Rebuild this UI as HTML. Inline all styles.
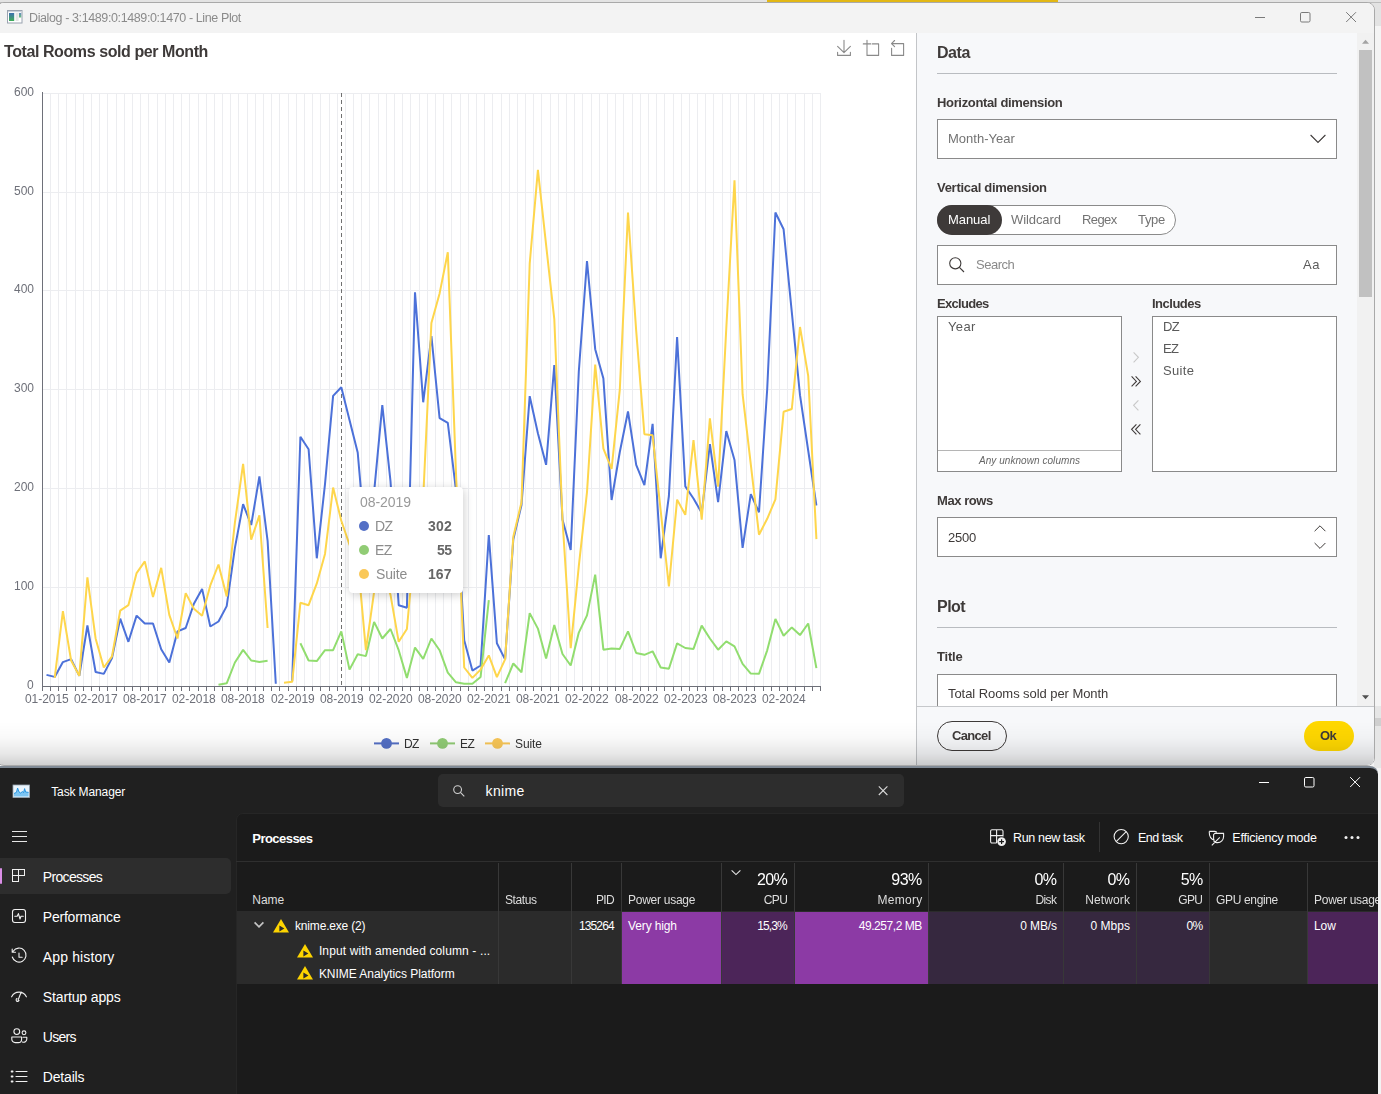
<!DOCTYPE html>
<html><head><meta charset="utf-8"><title>Line Plot</title>
<style>
html,body{margin:0;padding:0;}
html{overflow:hidden;width:1381px;height:1094px;}
body{width:1381px;height:1094px;overflow:hidden;background:#f3f3f3;font-family:"Liberation Sans",sans-serif;position:relative;}
.a{position:absolute;box-sizing:border-box;}
.t{position:absolute;white-space:nowrap;font-family:"Liberation Sans",sans-serif;}
.g .t{will-change:transform}
svg{overflow:visible}
</style></head><body>
<!-- desktop / other window strips -->
<div class="a" style="left:0;top:0;width:1381px;height:26px;background:#e3e3e3"></div>
<div class="a" style="left:0;top:2px;width:1381px;height:1px;background:#bdbdbd"></div>
<div class="a" style="left:767px;top:0;width:291px;height:2px;background:#e2b714"></div>
<div class="a" style="left:1374px;top:26px;width:7px;height:742px;background:#f4f4f4"></div>
<div class="a" style="left:1374px;top:706px;width:7px;height:62px;background:#e6e6e6"></div>
<div class="a" style="left:1374px;top:718px;width:7px;height:8px;background:#cfcfcf"></div>

<!-- DIALOG WINDOW -->
<div class="a" style="left:-4px;top:2px;width:1379px;height:764px;border:1px solid #a9a9a9;border-radius:8px;background:#fff;overflow:hidden">
<div class="a g" style="left:3px;top:-3px;width:1381px;height:1094px">
  <!-- title bar -->
  <div class="a" style="left:0;top:3px;width:1381px;height:30px;background:#f3f3f3"></div>
  <svg class="a" style="left:7px;top:10px" width="16" height="14" viewBox="0 0 16 14">
    <rect x="0.5" y="0.5" width="14.5" height="12.5" fill="#fff" stroke="#9aa3b0"/>
    <rect x="1" y="1" width="13.5" height="1.2" fill="#c9d0da"/>
    <defs><linearGradient id="gi" x1="0" y1="0" x2="0" y2="1"><stop offset="0" stop-color="#3d6fb0"/><stop offset="1" stop-color="#3fae58"/></linearGradient></defs>
    <rect x="2" y="3" width="5.2" height="8" fill="url(#gi)"/>
    <rect x="8.6" y="3" width="3" height="8" fill="#e4e4e4"/>
    <rect x="12" y="3" width="2.2" height="4.5" fill="url(#gi)" opacity="0.8"/>
  </svg>
  <svg class="a" style="left:1250px;top:8px" width="112" height="20" viewBox="1250 8 112 20" fill="none" stroke="#7a7a7a" stroke-width="1">
    <path d="M1255 17.5H1265"/>
    <rect x="1300.5" y="12.5" width="9.5" height="9.5" rx="1.3"/>
    <path d="M1346.2 12.2L1356 22M1356 12.2L1346.2 22"/>
  </svg>
  <!-- right panel backgrounds -->
  <div class="a" style="left:916px;top:33px;width:1px;height:733px;background:#c3c5c8"></div>
  <div class="a" style="left:917px;top:33px;width:457px;height:733px;background:#f7f8fa"></div>
  <!-- scrollbar -->
  <div class="a" style="left:1357px;top:33px;width:17px;height:673px;background:#f1f1f1"></div>
  <div class="a" style="left:1359px;top:50px;width:13px;height:247px;background:#c1c1c1"></div>
  <svg class="a" style="left:1357px;top:33px" width="17" height="673" viewBox="1357 33 17 673"><path d="M1362 43.8L1365.5 39.8L1369 43.8Z" fill="#a3a3a3"/><path d="M1362 695.2L1365.5 699.2L1369 695.2Z" fill="#505050"/></svg>
  <!-- panel controls -->
  <div class="a" style="left:937px;top:73px;width:400px;height:1px;background:#b9bcc0"></div>
  <div class="a" style="left:937px;top:119px;width:400px;height:40px;background:#fff;border:1px solid #8a8a8a"></div>
  <svg class="a" style="left:1308px;top:132px" width="20" height="14" viewBox="1308 132 20 14" fill="none" stroke="#3e3a39" stroke-width="1.1"><path d="M1310.6 135L1318 142.4L1325.4 135"/></svg>
  <div class="a" style="left:937px;top:205px;width:239px;height:30px;background:#fff;border:1px solid #8a8a8a;border-radius:15px"></div>
  <div class="a" style="left:937px;top:205px;width:64.5px;height:30px;background:#3e3a39;border-radius:15px"></div>
  <div class="a" style="left:937px;top:245px;width:400px;height:40px;background:#fff;border:1px solid #8a8a8a"></div>
  <svg class="a" style="left:946px;top:254px" width="22" height="22" viewBox="946 254 22 22" fill="none" stroke="#3e3a39" stroke-width="1.1"><circle cx="955.3" cy="263.3" r="5.6"/><path d="M959.4 267.4L964 272"/></svg>
  <div class="a" style="left:937px;top:316px;width:185px;height:156px;background:#fff;border:1px solid #8a8a8a"></div>
  <div class="a" style="left:938px;top:450px;width:183px;height:1px;background:#b5b5b5"></div>
  <div class="a" style="left:1152px;top:316px;width:185px;height:156px;background:#fff;border:1px solid #8a8a8a"></div>
  <svg class="a" style="left:1128px;top:348px" width="16" height="92" viewBox="1128 348 16 92" fill="none" stroke-width="1.1">
    <path d="M1133.6 352.3L1138.4 357.3L1133.6 362.3" stroke="#c8c8c8"/>
    <path d="M1131.6 376.4L1136.4 381.4L1131.6 386.4M1135.6 376.4L1140.4 381.4L1135.6 386.4" stroke="#3e3a39"/>
    <path d="M1138.4 400.3L1133.6 405.3L1138.4 410.3" stroke="#c8c8c8"/>
    <path d="M1136.4 424.3L1131.6 429.3L1136.4 434.3M1140.4 424.3L1135.6 429.3L1140.4 434.3" stroke="#3e3a39"/>
  </svg>
  <div class="a" style="left:937px;top:517px;width:400px;height:40px;background:#fff;border:1px solid #8a8a8a"></div>
  <svg class="a" style="left:1310px;top:520px" width="20" height="34" viewBox="1310 520 20 34" fill="none" stroke="#3e3a39" stroke-width="1"><path d="M1314.6 531.2L1320 525.8L1325.4 531.2M1314.6 543L1320 548.4L1325.4 543"/></svg>
  <div class="a" style="left:937px;top:627px;width:400px;height:1px;background:#b9bcc0"></div>
  <div class="a" style="left:937px;top:674px;width:400px;height:40px;background:#fff;border:1px solid #8a8a8a"></div>
  <!-- chart -->
<svg style="position:absolute;left:0;top:0" width="917" height="766" viewBox="0 0 917 766" fill="none">
<path d="M50.5 93V686 M58.5 93V686 M66.5 93V686 M75.5 93V686 M83.5 93V686 M91.5 93V686 M99.5 93V686 M107.5 93V686 M116.5 93V686 M124.5 93V686 M132.5 93V686 M140.5 93V686 M148.5 93V686 M157.5 93V686 M165.5 93V686 M173.5 93V686 M181.5 93V686 M189.5 93V686 M198.5 93V686 M206.5 93V686 M214.5 93V686 M222.5 93V686 M230.5 93V686 M238.5 93V686 M247.5 93V686 M255.5 93V686 M263.5 93V686 M271.5 93V686 M279.5 93V686 M288.5 93V686 M296.5 93V686 M304.5 93V686 M312.5 93V686 M320.5 93V686 M329.5 93V686 M337.5 93V686 M345.5 93V686 M353.5 93V686 M361.5 93V686 M369.5 93V686 M378.5 93V686 M386.5 93V686 M394.5 93V686 M402.5 93V686 M410.5 93V686 M419.5 93V686 M427.5 93V686 M435.5 93V686 M443.5 93V686 M451.5 93V686 M460.5 93V686 M468.5 93V686 M476.5 93V686 M484.5 93V686 M492.5 93V686 M501.5 93V686 M509.5 93V686 M517.5 93V686 M525.5 93V686 M533.5 93V686 M541.5 93V686 M550.5 93V686 M558.5 93V686 M566.5 93V686 M574.5 93V686 M582.5 93V686 M591.5 93V686 M599.5 93V686 M607.5 93V686 M615.5 93V686 M623.5 93V686 M632.5 93V686 M640.5 93V686 M648.5 93V686 M656.5 93V686 M664.5 93V686 M673.5 93V686 M681.5 93V686 M689.5 93V686 M697.5 93V686 M705.5 93V686 M713.5 93V686 M722.5 93V686 M730.5 93V686 M738.5 93V686 M746.5 93V686 M754.5 93V686 M763.5 93V686 M771.5 93V686 M779.5 93V686 M787.5 93V686 M795.5 93V686 M804.5 93V686 M812.5 93V686 M820.5 93V686" stroke="#ecedf0" stroke-width="1" shape-rendering="crispEdges"/>
<path d="M43 587.5H821 M43 488.5H821 M43 389.5H821 M43 290.5H821 M43 192.5H821 M43 93.5H821" stroke="#ecedf0" stroke-width="1" shape-rendering="crispEdges"/>
<path d="M341.5 93V686" stroke="#707070" stroke-width="1" stroke-dasharray="4 3" shape-rendering="crispEdges"/>
<g stroke-width="2" stroke-linejoin="bevel" stroke-linecap="butt" transform="translate(0,-0.6)">
<path d="M46.5 675.5 L54.7 677.5 L62.9 662.7 L71.1 659.7 L79.3 676.5 L87.4 626.1 L95.6 672.6 L103.8 674.5 L112.0 658.7 L120.2 619.2 L128.4 642.4 L136.6 616.2 L144.8 624.1 L153.0 624.1 L161.2 649.8 L169.3 663.1 L177.5 632.0 L185.7 628.6 L193.9 604.4 L202.1 589.5 L210.3 627.1 L218.5 622.1 L226.7 606.7 L234.9 548.5 L243.1 504.8 L251.2 525.6 L259.4 477.0 L267.6 541.4 L275.8 684.4 M292.2 681.5 L300.4 437.3 L308.6 449.8 L316.8 558.9 L325.0 484.7 L333.1 396.5 L341.3 387.9 L349.5 420.5 L357.7 453.1 L365.9 548.0 L374.1 492.7 L382.3 405.7 L390.5 481.8 L398.7 605.8 L406.9 608.3 L415.0 293.0 L423.2 402.9 L431.4 336.6 L439.6 418.7 L447.8 423.5 L456.0 490.7 L464.2 640.9 L472.4 671.2 L480.6 666.1 L488.8 535.7 L496.9 643.9 L505.1 660.0 L513.3 540.1 L521.5 505.5 L529.7 396.8 L537.9 433.9 L546.1 465.4 L554.3 365.6 L562.5 520.3 L570.7 550.5 L578.8 372.1 L587.0 261.6 L595.2 349.8 L603.4 379.2 L611.6 500.6 L619.8 452.6 L628.0 412.1 L636.2 465.4 L644.4 485.7 L652.6 424.4 L660.7 558.9 L668.9 496.6 L677.1 337.7 L685.3 487.0 L693.5 499.1 L701.7 513.4 L709.9 444.7 L718.1 502.8 L726.3 431.7 L734.5 460.5 L742.6 548.5 L750.8 494.7 L759.0 512.9 L767.2 389.8 L775.4 213.1 L783.6 229.9 L791.8 312.7 L800.0 395.8 L808.2 451.1 L816.4 506.1" stroke="#4c71d9"/>
<path d="M218.5 685.4 L226.7 683.9 L234.9 663.1 L243.1 650.5 L251.2 661.1 L259.4 662.5 L267.6 661.3 M300.4 643.9 L308.6 661.1 L316.8 661.7 L325.0 650.8 L333.1 650.8 L341.3 632.0 L349.5 670.2 L357.7 654.8 L365.9 656.7 L374.1 622.5 L382.3 639.1 L390.5 629.6 L398.7 650.8 L406.9 678.5 L415.0 648.2 L423.2 659.4 L431.4 639.1 L439.6 650.8 L447.8 673.3 L456.0 682.9 L464.2 684.4 L472.4 684.4 L480.6 677.5 L488.8 600.8 M505.1 683.7 L513.3 664.1 L521.5 672.9 L529.7 613.7 L537.9 629.2 L546.1 659.0 L554.3 625.5 L562.5 654.6 L570.7 666.1 L578.8 633.2 L587.0 616.0 L595.2 575.2 L603.4 650.3 L611.6 649.2 L619.8 649.5 L628.0 632.0 L636.2 653.6 L644.4 655.4 L652.6 651.9 L660.7 668.1 L668.9 669.4 L677.1 644.0 L685.3 648.6 L693.5 649.5 L701.7 626.2 L709.9 639.1 L718.1 650.3 L726.3 642.0 L734.5 646.9 L742.6 664.5 L750.8 674.2 L759.0 674.4 L767.2 650.9 L775.4 619.5 L783.6 636.3 L791.8 628.0 L800.0 635.7 L808.2 624.1 L816.4 668.7" stroke="#91dd6f"/>
<path d="M54.7 678.5 L62.9 611.8 L71.1 661.1 L79.3 676.5 L87.4 577.9 L95.6 639.0 L103.8 668.1 L112.0 656.9 L120.2 611.3 L128.4 605.8 L136.6 573.7 L144.8 562.0 L153.0 597.7 L161.2 568.4 L169.3 615.4 L177.5 639.1 L185.7 593.7 L193.9 609.3 L202.1 616.4 L210.3 586.0 L218.5 565.1 L226.7 597.1 L234.9 523.3 L243.1 464.5 L251.2 540.3 L259.4 516.0 L267.6 628.6 M284.0 683.4 L292.2 682.4 L300.4 603.4 L308.6 605.8 L316.8 584.0 L325.0 554.5 L333.1 488.2 L341.3 521.3 L349.5 545.4 L357.7 559.9 L365.9 650.8 L374.1 592.5 L382.3 567.8 L390.5 595.5 L398.7 642.4 L406.9 629.6 L415.0 541.1 L423.2 498.6 L431.4 323.6 L439.6 294.0 L447.8 252.8 L456.0 473.9 L464.2 668.1 L472.4 678.5 L480.6 670.2 L488.8 656.0 L496.9 677.7 L505.1 660.0 L513.3 537.3 L521.5 502.8 L529.7 264.3 L537.9 170.4 L546.1 245.5 L554.3 319.7 L562.5 520.3 L570.7 648.8 L578.8 566.8 L587.0 492.7 L595.2 365.1 L603.4 449.2 L611.6 469.4 L619.8 390.3 L628.0 213.1 L636.2 331.5 L644.4 434.8 L652.6 435.9 L660.7 511.4 L668.9 587.0 L677.1 500.2 L685.3 515.4 L693.5 440.7 L701.7 520.3 L709.9 418.9 L718.1 487.3 L726.3 328.6 L734.5 180.8 L742.6 394.8 L750.8 465.0 L759.0 535.3 L767.2 519.4 L775.4 500.0 L783.6 412.4 L791.8 409.6 L800.0 327.6 L808.2 376.4 L816.4 539.7" stroke="#fed64c"/>
</g>
<path d="M42.5 92V687 M42 686.5H821 M42.5 687V691 M50.5 687V691 M58.5 687V691 M66.5 687V691 M75.5 687V691 M83.5 687V691 M91.5 687V691 M99.5 687V691 M107.5 687V691 M116.5 687V691 M124.5 687V691 M132.5 687V691 M140.5 687V691 M148.5 687V691 M157.5 687V691 M165.5 687V691 M173.5 687V691 M181.5 687V691 M189.5 687V691 M198.5 687V691 M206.5 687V691 M214.5 687V691 M222.5 687V691 M230.5 687V691 M238.5 687V691 M247.5 687V691 M255.5 687V691 M263.5 687V691 M271.5 687V691 M279.5 687V691 M288.5 687V691 M296.5 687V691 M304.5 687V691 M312.5 687V691 M320.5 687V691 M329.5 687V691 M337.5 687V691 M345.5 687V691 M353.5 687V691 M361.5 687V691 M369.5 687V691 M378.5 687V691 M386.5 687V691 M394.5 687V691 M402.5 687V691 M410.5 687V691 M419.5 687V691 M427.5 687V691 M435.5 687V691 M443.5 687V691 M451.5 687V691 M460.5 687V691 M468.5 687V691 M476.5 687V691 M484.5 687V691 M492.5 687V691 M501.5 687V691 M509.5 687V691 M517.5 687V691 M525.5 687V691 M533.5 687V691 M541.5 687V691 M550.5 687V691 M558.5 687V691 M566.5 687V691 M574.5 687V691 M582.5 687V691 M591.5 687V691 M599.5 687V691 M607.5 687V691 M615.5 687V691 M623.5 687V691 M632.5 687V691 M640.5 687V691 M648.5 687V691 M656.5 687V691 M664.5 687V691 M673.5 687V691 M681.5 687V691 M689.5 687V691 M697.5 687V691 M705.5 687V691 M713.5 687V691 M722.5 687V691 M730.5 687V691 M738.5 687V691 M746.5 687V691 M754.5 687V691 M763.5 687V691 M771.5 687V691 M779.5 687V691 M787.5 687V691 M795.5 687V691 M804.5 687V691 M812.5 687V691 M820.5 687V691" stroke="#6e7079" stroke-width="1" shape-rendering="crispEdges"/>
<path d="M374.0 743.4H399.0" stroke="#5470c6" stroke-width="2"/><circle cx="386.5" cy="743.4" r="5.4" fill="#5470c6"/>
<path d="M430.0 743.4H455.0" stroke="#91cc75" stroke-width="2"/><circle cx="442.5" cy="743.4" r="5.4" fill="#91cc75"/>
<path d="M485.0 743.4H510.0" stroke="#fac858" stroke-width="2"/><circle cx="497.5" cy="743.4" r="5.4" fill="#fac858"/>
<g stroke="#8a8a8a" stroke-width="1.1" stroke-linecap="round" stroke-linejoin="round">
<path d="M844 40.2V52.4 M837.6 46.3L844 52.6L850.4 46.3 M837.6 52.3V55.4H850.4V52.3"/>
<path d="M867 40.3V55.4H878.6V43.9H872.4 M863.3 43.9H870.8"/>
<path d="M891.6 48.4V55.4H903.6V43.6H891.6 M894.6 40.5L891.5 43.6L894.6 46.7"/>
</g>
</svg>
<span class="t" style="top:12px;font-size:12.5px;line-height:12.5px;color:#8b8b8b;letter-spacing:-0.391px;left:28.70px;">Dialog - 3:1489:0:1489:0:1470 - Line Plot</span>
<span class="t" style="top:44px;font-size:16px;line-height:16px;color:#3e3a39;font-weight:700;letter-spacing:-0.417px;left:4.30px;">Total Rooms sold per Month</span>
<span class="t" style="top:679px;font-size:12px;line-height:12px;color:#6e7079;right:1347.40px;">0</span>
<span class="t" style="top:580px;font-size:12px;line-height:12px;color:#6e7079;right:1347.40px;">100</span>
<span class="t" style="top:481px;font-size:12px;line-height:12px;color:#6e7079;right:1347.40px;">200</span>
<span class="t" style="top:382px;font-size:12px;line-height:12px;color:#6e7079;right:1347.40px;">300</span>
<span class="t" style="top:283px;font-size:12px;line-height:12px;color:#6e7079;right:1347.40px;">400</span>
<span class="t" style="top:185px;font-size:12px;line-height:12px;color:#6e7079;right:1347.40px;">500</span>
<span class="t" style="top:86px;font-size:12px;line-height:12px;color:#6e7079;right:1347.40px;">600</span>
<span class="t" style="top:693px;font-size:12px;line-height:12px;color:#6e7079;letter-spacing:-0.058px;left:24.84px;">01-2015</span>
<span class="t" style="top:693px;font-size:12px;line-height:12px;color:#6e7079;letter-spacing:-0.058px;left:73.98px;">02-2017</span>
<span class="t" style="top:693px;font-size:12px;line-height:12px;color:#6e7079;letter-spacing:-0.058px;left:123.12px;">08-2017</span>
<span class="t" style="top:693px;font-size:12px;line-height:12px;color:#6e7079;letter-spacing:-0.058px;left:172.26px;">02-2018</span>
<span class="t" style="top:693px;font-size:12px;line-height:12px;color:#6e7079;letter-spacing:-0.058px;left:221.41px;">08-2018</span>
<span class="t" style="top:693px;font-size:12px;line-height:12px;color:#6e7079;letter-spacing:-0.058px;left:270.54px;">02-2019</span>
<span class="t" style="top:693px;font-size:12px;line-height:12px;color:#6e7079;letter-spacing:-0.058px;left:319.68px;">08-2019</span>
<span class="t" style="top:693px;font-size:12px;line-height:12px;color:#6e7079;letter-spacing:-0.058px;left:368.82px;">02-2020</span>
<span class="t" style="top:693px;font-size:12px;line-height:12px;color:#6e7079;letter-spacing:-0.058px;left:417.96px;">08-2020</span>
<span class="t" style="top:693px;font-size:12px;line-height:12px;color:#6e7079;letter-spacing:-0.058px;left:467.10px;">02-2021</span>
<span class="t" style="top:693px;font-size:12px;line-height:12px;color:#6e7079;letter-spacing:-0.058px;left:516.25px;">08-2021</span>
<span class="t" style="top:693px;font-size:12px;line-height:12px;color:#6e7079;letter-spacing:-0.058px;left:565.38px;">02-2022</span>
<span class="t" style="top:693px;font-size:12px;line-height:12px;color:#6e7079;letter-spacing:-0.058px;left:614.52px;">08-2022</span>
<span class="t" style="top:693px;font-size:12px;line-height:12px;color:#6e7079;letter-spacing:-0.058px;left:663.66px;">02-2023</span>
<span class="t" style="top:693px;font-size:12px;line-height:12px;color:#6e7079;letter-spacing:-0.058px;left:712.80px;">08-2023</span>
<span class="t" style="top:693px;font-size:12px;line-height:12px;color:#6e7079;letter-spacing:-0.058px;left:761.94px;">02-2024</span>
<span class="t" style="top:738px;font-size:12px;line-height:12px;color:#333;letter-spacing:-0.600px;left:403.90px;">DZ</span>
<span class="t" style="top:738px;font-size:12px;line-height:12px;color:#333;letter-spacing:-0.600px;left:459.98px;">EZ</span>
<span class="t" style="top:738px;font-size:12px;line-height:12px;color:#333;letter-spacing:-0.115px;left:515.40px;">Suite</span>
<span class="t" style="top:45px;font-size:16px;line-height:16px;color:#3e3a39;font-weight:700;letter-spacing:-0.463px;left:937.00px;">Data</span>
<span class="t" style="top:96px;font-size:13px;line-height:13px;color:#3e3a39;font-weight:700;letter-spacing:-0.341px;left:937.00px;">Horizontal dimension</span>
<span class="t" style="top:132px;font-size:13px;line-height:13px;color:#737373;left:948.00px;">Month-Year</span>
<span class="t" style="top:181px;font-size:13px;line-height:13px;color:#3e3a39;font-weight:700;letter-spacing:-0.287px;left:937.00px;">Vertical dimension</span>
<span class="t" style="top:213px;font-size:13px;line-height:13px;color:#fff;letter-spacing:-0.068px;left:948.00px;">Manual</span>
<span class="t" style="top:213px;font-size:13px;line-height:13px;color:#737373;letter-spacing:-0.083px;left:1010.70px;">Wildcard</span>
<span class="t" style="top:213px;font-size:13px;line-height:13px;color:#737373;letter-spacing:-0.595px;left:1081.50px;">Regex</span>
<span class="t" style="top:213px;font-size:13px;line-height:13px;color:#737373;letter-spacing:-0.329px;left:1137.50px;">Type</span>
<span class="t" style="top:258px;font-size:13px;line-height:13px;color:#8a8a8a;letter-spacing:-0.501px;left:976.00px;">Search</span>
<span class="t" style="top:258px;font-size:13px;line-height:13px;color:#5a5a5a;letter-spacing:0.594px;left:1302.50px;">Aa</span>
<span class="t" style="top:297px;font-size:13px;line-height:13px;color:#3e3a39;font-weight:700;letter-spacing:-0.685px;left:937.00px;">Excludes</span>
<span class="t" style="top:297px;font-size:13px;line-height:13px;color:#3e3a39;font-weight:700;letter-spacing:-0.493px;left:1152.00px;">Includes</span>
<span class="t" style="top:320px;font-size:13px;line-height:13px;color:#5a5a5a;letter-spacing:0.340px;left:948.00px;">Year</span>
<span class="t" style="top:320px;font-size:13px;line-height:13px;color:#5a5a5a;letter-spacing:-0.600px;left:1162.98px;">DZ</span>
<span class="t" style="top:342px;font-size:13px;line-height:13px;color:#5a5a5a;letter-spacing:-0.600px;left:1162.64px;">EZ</span>
<span class="t" style="top:364px;font-size:13px;line-height:13px;color:#5a5a5a;letter-spacing:0.340px;left:1163.00px;">Suite</span>
<span class="t" style="top:456px;font-size:10px;line-height:10px;color:#666;letter-spacing:0.052px;left:979.00px;font-style:italic;">Any unknown columns</span>
<span class="t" style="top:494px;font-size:13px;line-height:13px;color:#3e3a39;font-weight:700;letter-spacing:-0.421px;left:937.00px;">Max rows</span>
<span class="t" style="top:531px;font-size:13px;line-height:13px;color:#3e3a39;letter-spacing:-0.207px;left:948.00px;">2500</span>
<span class="t" style="top:599px;font-size:16px;line-height:16px;color:#3e3a39;font-weight:700;letter-spacing:-0.506px;left:937.00px;">Plot</span>
<span class="t" style="top:650px;font-size:13px;line-height:13px;color:#3e3a39;font-weight:700;letter-spacing:-0.200px;left:937.00px;">Title</span>
<span class="t" style="top:687px;font-size:13px;line-height:13px;color:#3e3a39;letter-spacing:-0.062px;left:948.00px;">Total Rooms sold per Month</span>
  <!-- tooltip -->
  <div class="a" style="left:349px;top:486.5px;width:113.5px;height:106.5px;background:#fff;border-radius:4px;box-shadow:1px 2px 10px rgba(0,0,0,0.2)"></div>
  <div class="a" style="left:359.4px;top:521.3px;width:10px;height:10px;border-radius:5px;background:#5470c6"></div>
  <div class="a" style="left:359.4px;top:545.2px;width:10px;height:10px;border-radius:5px;background:#91cc75"></div>
  <div class="a" style="left:359.4px;top:569px;width:10px;height:10px;border-radius:5px;background:#fac858"></div>
<span class="t" style="top:495px;font-size:14px;line-height:14px;color:#9a9a9a;letter-spacing:-0.065px;left:359.60px;">08-2019</span>
<span class="t" style="top:519px;font-size:14px;line-height:14px;color:#8c8c8c;letter-spacing:-0.600px;left:375.06px;">DZ</span>
<span class="t" style="top:519px;font-size:14px;line-height:14px;color:#666;font-weight:700;letter-spacing:0.220px;left:427.90px;">302</span>
<span class="t" style="top:543px;font-size:14px;line-height:14px;color:#8c8c8c;letter-spacing:-0.600px;left:374.80px;">EZ</span>
<span class="t" style="top:543px;font-size:14px;line-height:14px;color:#666;font-weight:700;letter-spacing:-0.478px;left:436.60px;">55</span>
<span class="t" style="top:567px;font-size:14px;line-height:14px;color:#8c8c8c;letter-spacing:-0.155px;left:375.70px;">Suite</span>
<span class="t" style="top:567px;font-size:14px;line-height:14px;color:#666;font-weight:700;letter-spacing:0.070px;left:428.20px;">167</span>
  <!-- bottom bar -->
  <div class="a" style="left:917px;top:706px;width:457px;height:60px;background:#f7f8fa;border-top:1px solid #c6c8cb"></div>
  <div class="a" style="left:937px;top:721px;width:70px;height:29.5px;border:1px solid #3e3a39;border-radius:15px"></div>
  <div class="a" style="left:1303.5px;top:721px;width:50px;height:29.5px;background:#ffd800;border-radius:15px"></div>
<span class="t" style="top:729px;font-size:13px;line-height:13px;color:#3e3a39;font-weight:700;letter-spacing:-0.668px;left:952.00px;">Cancel</span>
<span class="t" style="top:729px;font-size:13px;line-height:13px;color:#3e3a39;font-weight:700;letter-spacing:-0.600px;left:1319.83px;">Ok</span>
  <!-- shadow from task manager window -->
  <div class="a" style="left:0;top:722px;width:1381px;height:45px;background:linear-gradient(to bottom,rgba(0,0,0,0) 0%,rgba(0,0,0,0.025) 35%,rgba(0,0,0,0.09) 70%,rgba(0,0,0,0.2) 100%)"></div>
</div></div>

<!-- TASK MANAGER -->
<div class="a" style="left:-12px;top:766px;width:1390px;height:328px;border-radius:8px 8px 0 0;background:#202020;overflow:hidden;border-top:2px solid #808a95">
<div class="a" style="left:12px;top:-768px;width:1381px;height:1094px">
  <div class="a" style="left:0;top:776px;width:1370px;height:320px;background:#202020"></div>
  <!-- app icon -->
  <svg class="a" style="left:13px;top:785px" width="17" height="13" viewBox="0 0 17 13"><rect x="0" y="0" width="16.5" height="12.5" fill="#e9f4fc" stroke="#9aa7b3" stroke-width="0.8"/><path d="M1 8.5L3.4 7.4L4.6 3L6 7L7.6 8L9.4 6.6L10.6 7.6L11.6 3.6L12.6 7L15.6 7.4V11.6H1Z" fill="#7cc5f3"/><path d="M1 8.5L3.4 7.4L4.6 3L6 7L7.6 8L9.4 6.6L10.6 7.6L11.6 3.6L12.6 7L15.6 7.4" fill="none" stroke="#1b8fe0" stroke-width="0.9"/></svg>
  <!-- search -->
  <div class="a" style="left:438px;top:774px;width:466px;height:33px;background:#2d2d2d;border-radius:5px"></div>
  <svg class="a" style="left:450px;top:782px" width="18" height="18" viewBox="450 782 18 18" fill="none" stroke="#d0d0d0" stroke-width="1.1"><circle cx="457.6" cy="789.6" r="3.9"/><path d="M460.4 792.4L464.3 796.3"/></svg>
  <svg class="a" style="left:876px;top:784px" width="14" height="14" viewBox="876 784 14 14" fill="none" stroke="#d8d8d8" stroke-width="1.1"><path d="M878.8 786.4L887.4 795M887.4 786.4L878.8 795"/></svg>
  <!-- window controls -->
  <svg class="a" style="left:1250px;top:772px" width="120" height="22" viewBox="1250 772 120 22" fill="none" stroke="#fff" stroke-width="1"><path d="M1259 782.5H1269"/><rect x="1304.5" y="777.5" width="9.5" height="9.5" rx="1.3"/><path d="M1350.2 777.2L1360 787M1360 777.2L1350.2 787"/></svg>
  <!-- hamburger -->
  <svg class="a" style="left:10px;top:828px" width="20" height="16" viewBox="10 828 20 16" stroke="#e6e6e6" stroke-width="1"><path d="M12 831.5H27M12 836.5H27M12 841.5H27"/></svg>
  <!-- sidebar selected -->
  <div class="a" style="left:-6px;top:858px;width:237px;height:36px;background:#2d2d2d;border-radius:5px"></div>
  <div class="a" style="left:0;top:868px;width:2.4px;height:16px;background:#da8ee7;border-radius:1.2px"></div>
  <svg class="a" style="left:8px;top:860px" width="24" height="234" viewBox="8 860 24 234" fill="none" stroke="#f0f0f0" stroke-width="1.1" stroke-linecap="round" stroke-linejoin="round">
    <!-- processes -->
    <path d="M14 869.5H23a1.5 1.5 0 0 1 1.5 1.5V875.5H18.5V880a1.5 1.5 0 0 1-1.5 1.5H14a1.5 1.5 0 0 1-1.5-1.5V871a1.5 1.5 0 0 1 1.5-1.5ZM18.5 869.5V875.5M12.5 875.5H18.5" shape-rendering="crispEdges"/>
    <!-- performance -->
    <rect x="12.5" y="909.5" width="13" height="13" rx="2.4"/><path d="M14.8 916.3H17.2L18.4 913.6L20 919L21 916.3H23.3"/>
    <!-- app history -->
    <path d="M13.2 951.2A7 7 0 1 1 12.3 957M12.2 949V952.3H15.5M19 953V957.2H22.2"/>
    <!-- startup -->
    <path d="M11.8 996.6A8 8 0 0 1 26.2 996.6M13.2 994.2L11.6 996.8M24.8 994.2L26.4 996.8M21.2 992L18 1000.2M17 998.6a1.5 1.5 0 1 0 2 2"/>
    <!-- users -->
    <circle cx="16.8" cy="1031.6" r="2.9"/><circle cx="24" cy="1032.8" r="1.9"/><path d="M11.8 1037H21.6V1039.2a3.4 3.4 0 0 1-3.4 3.4H15.2a3.4 3.4 0 0 1-3.4-3.4ZM23 1037.2H26.8V1039a3.2 3.2 0 0 1-4.4 3"/>
    <!-- details -->
    <path d="M16 1071.5H27M16 1076.5H27M16 1081.5H27"/><path d="M11.6 1071.5H12.6M11.6 1076.5H12.6M11.6 1081.5H12.6" stroke-width="1.8"/>
  </svg>
  <!-- main panel -->
  <div class="a" style="left:235.5px;top:813px;width:1150px;height:300px;background:#1b1b1b;border-radius:7px 0 0 0;border:1px solid #262626"></div>
  <div class="a" style="left:244px;top:814px;width:1134px;height:290px;background:#1b1b1b"></div>
  <div class="a" style="left:236px;top:861px;width:1145px;height:1.4px;background:#2f2f2f"></div>
  <!-- toolbar icons -->
  <svg class="a" style="left:986px;top:824px" width="380" height="26" viewBox="986 824 380 26" fill="none" stroke="#f0f0f0" stroke-width="1.1" stroke-linejoin="round">
    <path d="M990.6 831.2a1.4 1.4 0 0 1 1.4-1.4H1001.6a1.4 1.4 0 0 1 1.4 1.4V836.4M990.6 831.2V841.6a1.4 1.4 0 0 0 1.4 1.4H996.6M990.6 835.6H1003M996.6 829.8V843"/>
    <circle cx="1001.6" cy="841.6" r="4.3" fill="#f0f0f0" stroke="none"/><path d="M1001.6 839.2V844M999.2 841.6H1004" stroke="#1b1b1b" stroke-width="1.2"/>
    <path d="M1099.5 822V852" stroke="#333" stroke-width="1"/>
    <circle cx="1121.2" cy="836.6" r="7.1"/><path d="M1116.2 841.6L1126.2 831.6"/>
    <path d="M1209.2 831.4H1214.6a3.6 3.6 0 0 1 2.2 .8M1209.2 831.4c0 5.4 1.6 8 5.4 8.6M1214.8 833.4H1223.6V836.6a6 6 0 0 1-6 6H1216.6a3 3 0 0 1-3-3V834.6ZM1211.8 845.4L1219.8 837.4"/>
    <circle cx="1346" cy="837.4" r="1.5" fill="#f0f0f0" stroke="none"/><circle cx="1352" cy="837.4" r="1.5" fill="#f0f0f0" stroke="none"/><circle cx="1358" cy="837.4" r="1.5" fill="#f0f0f0" stroke="none"/>
  </svg>
  <!-- table -->
  <div class="a" style="left:237px;top:911px;width:1141px;height:73px;background:#2b2b2b"></div>
  <div class="a" style="left:622px;top:912px;width:100px;height:72px;background:#8c3aa5"></div>
  <div class="a" style="left:722px;top:912px;width:73px;height:72px;background:#4c2559"></div>
  <div class="a" style="left:795px;top:912px;width:134px;height:72px;background:#8c3aa5"></div>
  <div class="a" style="left:929px;top:912px;width:135px;height:72px;background:#36283f"></div>
  <div class="a" style="left:1064px;top:912px;width:72.5px;height:72px;background:#36283f"></div>
  <div class="a" style="left:1136.5px;top:912px;width:73px;height:72px;background:#36283f"></div>
  <div class="a" style="left:1307.5px;top:912px;width:74px;height:72px;background:#4c2559"></div>
  <svg class="a" style="left:236px;top:862px" width="1145" height="122" viewBox="236 862 1145 122" fill="none" stroke="#383838" stroke-width="1">
    <path d="M498.5 863V984M571.5 863V984M621.5 863V984M721.5 863V984M794.5 863V984M928.5 863V984M1063.5 863V984M1136.5 863V984M1209.5 863V984M1307.5 863V984"/>
    <path d="M731.6 870.4L736 874.6L740.4 870.4" stroke="#e8e8e8" stroke-width="1.1"/>
    <path d="M254.6 922.4L259 926.8L263.4 922.4" stroke="#c4c4c4" stroke-width="1.7"/>
  </svg>
  <svg class="a" style="left:270px;top:916px" width="50" height="68" viewBox="270 916 50 68">
    <path d="M273 932.6L281 919L289 932.6Z" fill="#fdd400"/><path d="M279.4 925.6L284.4 928.6L279.4 931.6Z" fill="#2a2a2a"/><path d="M297 957.6L305 944L313 957.6Z" fill="#fdd400"/><path d="M303.4 950.6L308.4 953.6L303.4 956.6Z" fill="#2a2a2a"/><path d="M297 979.6L305 966L313 979.6Z" fill="#fdd400"/><path d="M303.4 972.6L308.4 975.6L303.4 978.6Z" fill="#2a2a2a"/>
  </svg>
<span class="t" style="top:786px;font-size:12px;line-height:12px;color:#ffffff;letter-spacing:-0.116px;left:51.20px;">Task Manager</span>
<span class="t" style="top:784px;font-size:14px;line-height:14px;color:#ffffff;letter-spacing:0.310px;left:485.60px;">knime</span>
<span class="t" style="top:870px;font-size:14px;line-height:14px;color:#ffffff;letter-spacing:-0.670px;left:42.80px;">Processes</span>
<span class="t" style="top:910px;font-size:14px;line-height:14px;color:#ffffff;letter-spacing:-0.226px;left:42.80px;">Performance</span>
<span class="t" style="top:950px;font-size:14px;line-height:14px;color:#ffffff;letter-spacing:0.135px;left:42.80px;">App history</span>
<span class="t" style="top:990px;font-size:14px;line-height:14px;color:#ffffff;letter-spacing:-0.136px;left:42.80px;">Startup apps</span>
<span class="t" style="top:1030px;font-size:14px;line-height:14px;color:#ffffff;letter-spacing:-0.716px;left:42.80px;">Users</span>
<span class="t" style="top:1070px;font-size:14px;line-height:14px;color:#ffffff;letter-spacing:-0.183px;left:42.80px;">Details</span>
<span class="t" style="top:832px;font-size:13px;line-height:13px;color:#ffffff;font-weight:700;letter-spacing:-0.545px;left:252.30px;">Processes</span>
<span class="t" style="top:832px;font-size:12.5px;line-height:12.5px;color:#ffffff;letter-spacing:-0.339px;left:1013.00px;">Run new task</span>
<span class="t" style="top:832px;font-size:12.5px;line-height:12.5px;color:#ffffff;letter-spacing:-0.520px;left:1138.00px;">End task</span>
<span class="t" style="top:832px;font-size:12.5px;line-height:12.5px;color:#ffffff;letter-spacing:-0.237px;left:1232.30px;">Efficiency mode</span>
<span class="t" style="top:894px;font-size:12px;line-height:12px;color:#dedede;letter-spacing:-0.039px;left:252.30px;">Name</span>
<span class="t" style="top:894px;font-size:12px;line-height:12px;color:#dedede;letter-spacing:-0.426px;left:505.00px;">Status</span>
<span class="t" style="top:894px;font-size:12px;line-height:12px;color:#dedede;letter-spacing:-0.600px;left:595.88px;">PID</span>
<span class="t" style="top:894px;font-size:12px;line-height:12px;color:#dedede;letter-spacing:-0.275px;left:628.10px;">Power usage</span>
<span class="t" style="top:872px;font-size:16px;line-height:16px;color:#ffffff;letter-spacing:-0.600px;left:756.97px;">20%</span>
<span class="t" style="top:894px;font-size:12px;line-height:12px;color:#dedede;letter-spacing:-0.600px;left:763.66px;">CPU</span>
<span class="t" style="top:872px;font-size:16px;line-height:16px;color:#ffffff;letter-spacing:-0.516px;left:891.30px;">93%</span>
<span class="t" style="top:894px;font-size:12px;line-height:12px;color:#dedede;letter-spacing:0.311px;left:877.40px;">Memory</span>
<span class="t" style="top:872px;font-size:16px;line-height:16px;color:#ffffff;letter-spacing:-0.600px;left:1034.47px;">0%</span>
<span class="t" style="top:894px;font-size:12px;line-height:12px;color:#dedede;letter-spacing:-0.581px;left:1035.40px;">Disk</span>
<span class="t" style="top:872px;font-size:16px;line-height:16px;color:#ffffff;letter-spacing:-0.600px;left:1107.57px;">0%</span>
<span class="t" style="top:894px;font-size:12px;line-height:12px;color:#dedede;letter-spacing:0.131px;left:1085.20px;">Network</span>
<span class="t" style="top:872px;font-size:16px;line-height:16px;color:#ffffff;letter-spacing:-0.600px;left:1180.67px;">5%</span>
<span class="t" style="top:894px;font-size:12px;line-height:12px;color:#dedede;letter-spacing:-0.600px;left:1178.18px;">GPU</span>
<span class="t" style="top:894px;font-size:12px;line-height:12px;color:#dedede;letter-spacing:-0.342px;left:1216.00px;">GPU engine</span>
<span class="t" style="top:894px;font-size:12px;line-height:12px;color:#dedede;letter-spacing:-0.275px;left:1314.00px;">Power usage</span>
<span class="t" style="top:920px;font-size:12px;line-height:12px;color:#ffffff;letter-spacing:-0.175px;left:295.00px;">knime.exe (2)</span>
<span class="t" style="top:920px;font-size:12px;line-height:12px;color:#ffffff;letter-spacing:-0.850px;left:578.90px;">135264</span>
<span class="t" style="top:920px;font-size:12px;line-height:12px;color:#ffffff;letter-spacing:-0.143px;left:628.10px;">Very high</span>
<span class="t" style="top:920px;font-size:12px;line-height:12px;color:#ffffff;letter-spacing:-0.850px;left:757.17px;">15,3%</span>
<span class="t" style="top:920px;font-size:12px;line-height:12px;color:#ffffff;letter-spacing:-0.455px;left:858.80px;">49.257,2 MB</span>
<span class="t" style="top:920px;font-size:12px;line-height:12px;color:#ffffff;letter-spacing:-0.129px;left:1020.30px;">0 MB/s</span>
<span class="t" style="top:920px;font-size:12px;line-height:12px;color:#ffffff;letter-spacing:0.008px;left:1090.60px;">0 Mbps</span>
<span class="t" style="top:920px;font-size:12px;line-height:12px;color:#ffffff;letter-spacing:-0.600px;left:1186.46px;">0%</span>
<span class="t" style="top:920px;font-size:12px;line-height:12px;color:#ffffff;letter-spacing:-0.108px;left:1314.00px;">Low</span>
<span class="t" style="top:945px;font-size:12px;line-height:12px;color:#ffffff;letter-spacing:0.129px;left:318.90px;">Input with amended column - ...</span>
<span class="t" style="top:968px;font-size:12px;line-height:12px;color:#ffffff;letter-spacing:-0.040px;left:318.90px;">KNIME Analytics Platform</span>
</div></div>
</body></html>
